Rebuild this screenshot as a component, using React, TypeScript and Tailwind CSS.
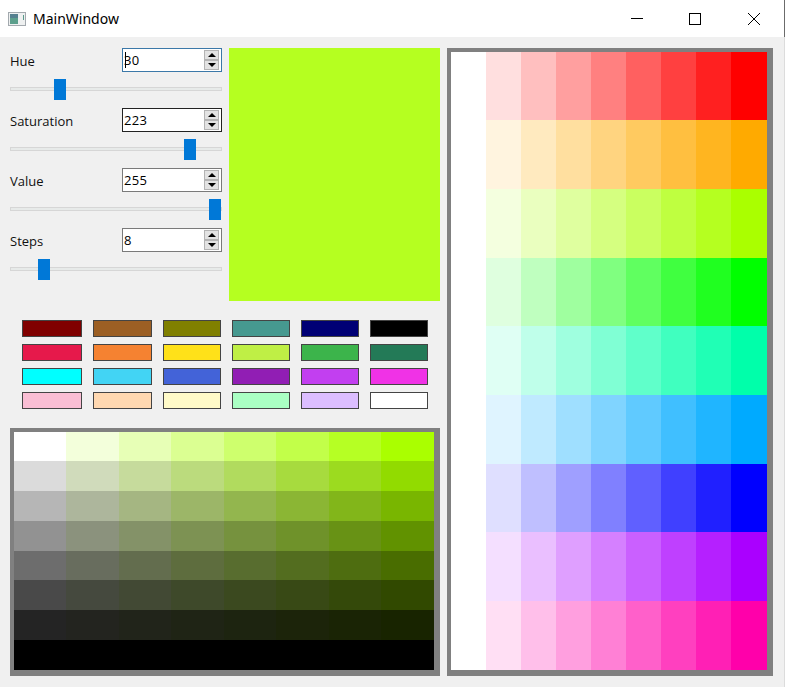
import { useState } from 'react';

// same maths as QColor.fromHsv: h in degrees, s and v in 0..255
function hsv(h: number, s: number, v: number) {
  const sat = s / 255;
  const val = v / 255;
  const f = (n: number) => {
    const k = (n + h / 60) % 6;
    return Math.round(255 * (val - val * sat * Math.max(0, Math.min(k, 4 - k, 1))));
  };
  return `rgb(${f(5)}, ${f(3)}, ${f(1)})`;
}

// Qt floors the cell edges, so the tracks alternate by a pixel
function tracks(total: number, n: number) {
  const out = [];
  for (let i = 0; i < n; i++) {
    out.push(`${Math.floor(((i + 1) * total) / n) - Math.floor((i * total) / n)}px`);
  }
  return out.join(' ');
}

const swatches = [
  ['#800000', '#9c5f24', '#808000', '#469990', '#000075', '#000000'],
  ['#e6194b', '#f58231', '#ffe119', '#bfef45', '#3cb44b', '#237a57'],
  ['#00ffff', '#42d4f4', '#4363d8', '#911eb4', '#c23ff0', '#f032e6'],
  ['#fabed4', '#ffd8b1', '#fffac8', '#aaffc3', '#dcbeff', '#ffffff'],
];

const controls = [
  { label: 'Hue', value: '30', thumb: 44, border: 'border-[#3b78a8]' },
  { label: 'Saturation', value: '223', thumb: 174, border: 'border-[#222222]' },
  { label: 'Value', value: '255', thumb: 199, border: 'border-[#7a7a7a]' },
  { label: 'Steps', value: '8', thumb: 28, border: 'border-[#7a7a7a]' },
];

function Arrow({ up }: { up?: boolean }) {
  return (
    <div className="flex-1 bg-[#e3e3e3] border border-[#b4b4b4] flex items-center justify-center">
      <svg width="8" height="4" viewBox="0 0 8 4">
        <path d={up ? 'M4 0 L8 4 L0 4 Z' : 'M0 0 L8 0 L4 4 Z'} fill="#000" />
      </svg>
    </div>
  );
}

function SpinBox({ value, border, caret }: { value: string; border: string; caret?: boolean }) {
  return (
    <div className={`relative w-[100px] h-6 bg-white border ${border} flex items-center pl-[1px] pr-[1px]`}>
      <span className="flex-1 text-[13px] leading-none tracking-[0.3px] text-black">{value}</span>
      {caret && <div className="absolute left-[2px] top-[3px] h-4 w-[3px] border-l border-black" />}
      <div className="w-[15px] h-[20px] flex flex-col mr-[1px]">
        <Arrow up />
        <Arrow />
      </div>
    </div>
  );
}

function Slider({ thumb }: { thumb: number }) {
  return (
    <div className="relative h-[21px]">
      <div className="mt-2 w-full h-1 bg-[#e7eae9] border border-[#d6d6d6]" />
      <div className="absolute top-0 w-3 h-[21px] bg-[#0078d7]" style={{ left: thumb }} />
    </div>
  );
}

function ColorGrid({ rows, cols, width, height, color, className }: { rows: number; cols: number; width: number; height: number; color: (r: number, c: number) => string; className: string }) {
  const cells = [];
  for (let r = 0; r < rows; r++) {
    for (let c = 0; c < cols; c++) {
      cells.push(<div key={`${r}-${c}`} style={{ background: color(r, c) }} />);
    }
  }
  return (
    <div
      className={`border-t-4 border-l-4 border-r-[6px] border-b-[6px] border-[#808080] grid ${className}`}
      style={{ gridTemplateColumns: tracks(width, cols), gridTemplateRows: tracks(height, rows) }}
    >
      {cells}
    </div>
  );
}

export default function App() {
  const [hue] = useState(80);

  return (
    <div className="w-[785px] h-[687px] bg-[#f0f0f0] flex flex-col font-['Open_Sans','Liberation_Sans',sans-serif]">
      <div className="h-[37px] bg-white flex items-center shrink-0 border-r border-[#6b6b6b]">
        <svg className="ml-2 mr-[7px]" width="18" height="14" viewBox="0 0 18 14">
          <rect x="0.5" y="0.5" width="17" height="13" fill="#eef0f0" stroke="#a3a9ae" />
          <rect x="2" y="2" width="8" height="10" fill="#5c9f8c" />
          <rect x="2" y="2" width="8" height="4" fill="#55808f" />
          <rect x="15" y="3" width="1" height="5" fill="#5a9a8a" />
        </svg>
        <span className="font-['Noto_Sans','Liberation_Sans',sans-serif] text-[14px] text-black">MainWindow</span>
        <div className="ml-auto flex items-center">
          <div className="w-[58px] flex justify-center">
            <div className="w-3 h-px bg-black" />
          </div>
          <div className="w-[58px] flex justify-center">
            <div className="w-3 h-3 border border-black" />
          </div>
          <div className="w-[60px] flex justify-center">
            <svg width="12" height="12" viewBox="0 0 12 12">
              <path d="M0 0 L12 12 M12 0 L0 12" stroke="#000" fill="none" />
            </svg>
          </div>
        </div>
      </div>

      <div className="flex flex-1 pt-[11px] pl-[10px] gap-[7px] border-r border-[#dcdcdc]">
        <div className="w-[430px] shrink-0 flex flex-col">
          <div className="flex gap-[7px]">
            <div className="w-[212px] flex flex-col gap-2">
              {controls.map((ctl) => (
                <div key={ctl.label} className="flex flex-col gap-[7px]">
                  <div className="flex items-center justify-between">
                    <span className="pt-[3px] text-[13px] text-[#111111]">{ctl.label}</span>
                    <SpinBox value={ctl.value} border={ctl.border} caret={ctl.label === 'Hue'} />
                  </div>
                  <Slider thumb={ctl.thumb} />
                </div>
              ))}
            </div>
            <div className="w-[211px] h-[253px]" style={{ background: hsv(hue, 223, 255) }} />
          </div>

          <div className="mt-[19px] pl-3 grid grid-cols-[60px_59px_58px_58px_58px_58px] gap-x-[11px] gap-y-[7px]">
            {swatches.flat().map((c, i) => (
              <div key={i} className="h-[17px] border border-[#444444]" style={{ background: c }} />
            ))}
          </div>

          <ColorGrid
            rows={8}
            cols={8}
            width={420}
            height={238}
            className="mt-[19px] h-[248px]"
            color={(r, c) => hsv(hue, (c * 255) / 7, ((7 - r) * 255) / 7)}
          />
        </div>

        <ColorGrid
          rows={9}
          cols={9}
          width={316}
          height={618}
          className="w-[326px] h-[628px]"
          color={(r, c) => hsv(r * 40, (c * 255) / 8, 255)}
        />
      </div>
    </div>
  );
}
